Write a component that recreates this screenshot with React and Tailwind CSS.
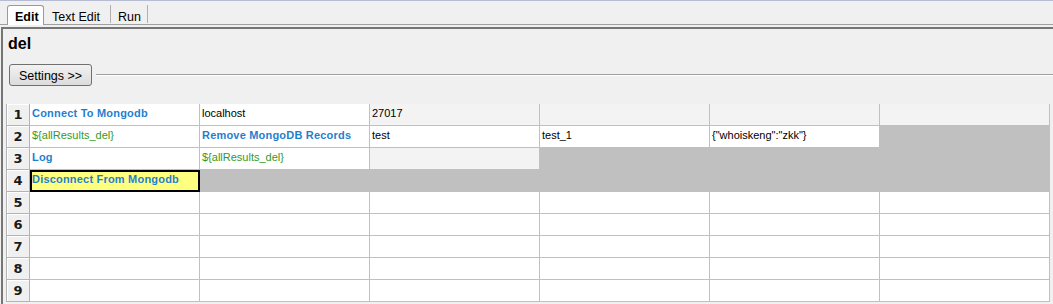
const K = 'kw';
const V = 'var';
const T = 'txt';

const W = 'bg-white';
const L = 'bg-[#f3f3f3]';
const D = 'bg-[#c0c0c0]';

const rows = [
  [[K, 'Connect To Mongodb', W], [T, 'localhost', W], [T, '27017', L], [T, '', L], [T, '', L], [T, '', L]],
  [[V, '${allResults_del}', W], [K, 'Remove MongoDB Records', W], [T, 'test', W], [T, 'test_1', W], [T, '{"whoiskeng":"zkk"}', W], [T, '', D]],
  [[K, 'Log', W], [V, '${allResults_del}', W], [T, '', L], [T, '', D], [T, '', D], [T, '', D]],
  [[K, 'Disconnect From Mongodb', 'sel'], [T, '', D], [T, '', D], [T, '', D], [T, '', D], [T, '', D]],
];
for (let i = 0; i < 5; i++) rows.push(Array.from({ length: 6 }, () => [T, '', W]));

const textCls = {
  kw: 'font-bold text-[#1f7fcf] tracking-[0.2px]',
  var: 'text-[#339a1f]',
  txt: 'text-black',
};

function Cell({ kind, text, bg }) {
  if (bg === 'sel') {
    return (
      <div className="w-[170px] h-[22px] shrink-0 border-2 border-black bg-[#ffff80] pl-0 pt-[1px] leading-[13px] whitespace-nowrap overflow-hidden">
        <span className={textCls[kind]}>{text}</span>
      </div>
    );
  }
  const line = bg === D ? 'border-[#c0c0c0]' : 'border-[#c0c0c0]';
  return (
    <div className={`w-[170px] h-[22px] shrink-0 border-r border-b ${line} ${bg} pl-[2px] pt-[3px] leading-[13px] whitespace-nowrap overflow-hidden`}>
      <span className={textCls[kind]}>{text}</span>
    </div>
  );
}

export default function App() {
  return (
    <div className="w-[1053px] h-[304px] overflow-hidden bg-[#f0f0f0] border-t border-[#b6bbd4] font-['Liberation_Sans',Arial,sans-serif] text-[11px] text-black">
      {/* tab strip */}
      <div className="h-[24px] flex items-start pl-[7px] border-b border-[#a0a0a0] text-[12.5px] leading-[14px]">
        <div className="mt-[4px] h-[20px] w-[37px] bg-white border border-b-0 border-[#9a9a9a] rounded-t-[3px] pl-[7px] pt-[4px] font-bold">Edit</div>
        <div className="mt-[4px] h-[18px] w-[67px] border-r border-[#b0b0b0] pl-[8px] pt-[5px]">Text Edit</div>
        <div className="mt-[4px] h-[18px] w-[37px] border-r border-[#b0b0b0] pl-[7px] pt-[5px]">Run</div>
      </div>

      {/* panel */}
      <div className="mt-[2px] ml-[1px] h-[300px] border-t-2 border-l-2 border-[#767676]">
        <div className="pl-[5px] pt-[6px] text-[16px] leading-[18px] font-bold">del</div>

        <div className="mt-[11px] pl-[6px] flex items-center">
          <button className="h-[22px] w-[83px] shrink-0 rounded-[3px] border border-[#707070] bg-gradient-to-b from-[#f2f2f2] to-[#dcdcdc] text-[12.5px] leading-[14px] text-black pt-[1px]">
            Settings &gt;&gt;
          </button>
          <div className="flex-1 ml-[4px] h-[2px] border-t border-[#a0a0a0] border-b border-b-white" />
        </div>

        {/* grid */}
        <div className="mt-[18px] ml-[3px]">
          {rows.map((r, i) => (
            <div key={i} className="flex">
              <div className="w-[24px] h-[22px] shrink-0 border-l border-r border-b border-[#b4b4b4] bg-[#f0f0f0] shadow-[inset_1px_1px_0_#ffffff] text-center pt-[3px] font-['DejaVu_Sans',sans-serif] font-bold text-[13px] leading-[15px] text-[#1a1a1a]">
                {i + 1}
              </div>
              {r.map(([kind, text, bg], j) => (
                <Cell key={j} kind={kind} text={text} bg={bg} />
              ))}
            </div>
          ))}
        </div>
      </div>
    </div>
  );
}
